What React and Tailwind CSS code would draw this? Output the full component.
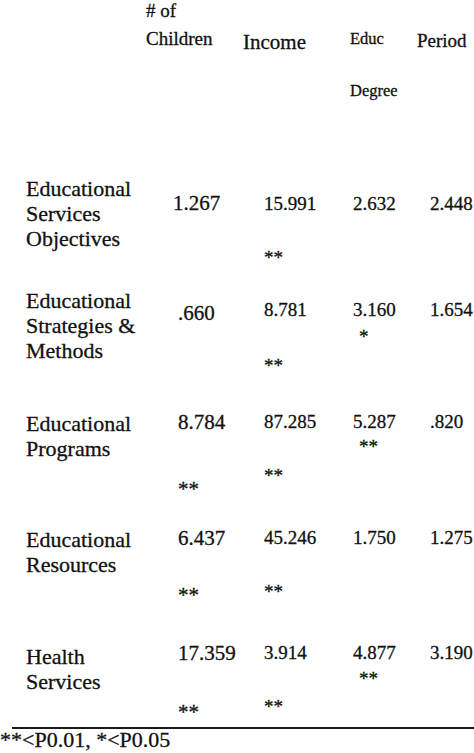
import React from "react";

// same column grid for header and every row
const cols = "grid grid-cols-[146px_97px_107px_67px_57px]";

const Label = ({ lines }) => (
  <div className="pl-[26px] text-[22px] leading-[25px]">
    {lines.map((l) => (
      <div key={l}>{l}</div>
    ))}
  </div>
);

export default function App() {
  return (
    <div className="w-[474px] h-[753px] overflow-hidden bg-white text-[#111111] [-webkit-text-stroke:0.3px_#111111] [font-family:Liberation_Serif,Times_New_Roman,serif]">
      {/* Header */}
      <div className={`${cols} h-[176px]`}>
        <div />
        <div className="pt-[1.4px] text-[19px] leading-none">
          <div># of</div>
          <div className="mt-[8.7px]">Children</div>
        </div>
        <div className="pt-[31.7px] text-[21px] leading-none">Income</div>
        <div className="pt-[31.2px] text-[16.5px] leading-none">
          <div>Educ</div>
          <div className="mt-[35.2px]">Degree</div>
        </div>
        <div className="pt-[30.8px] text-[19px] leading-none">Period</div>
      </div>

      {/* Row 1 */}
      <div className={`${cols} h-[112px]`}>
        <Label lines={["Educational", "Services", "Objectives"]} />
        <div className="pl-[27px] pt-[17px] text-[21px] leading-none">1.267</div>
        <div className="pl-[21px] pt-[18px] text-[19px] leading-none">
          <div>15.991</div>
          <div className="mt-[34.5px]">**</div>
        </div>
        <div className="pl-[3px] pt-[18px] text-[19px] leading-none">2.632</div>
        <div className="pl-[13px] pt-[18px] text-[19px] leading-none">2.448</div>
      </div>

      {/* Row 2 */}
      <div className={`${cols} h-[123px]`}>
        <Label lines={["Educational", "Strategies &", "Methods"]} />
        <div className="pl-[32px] pt-[15.3px] text-[21px] leading-none">.660</div>
        <div className="pl-[21px] pt-[11.6px] text-[19px] leading-none">
          <div>8.781</div>
          <div className="mt-[37.6px]">**</div>
        </div>
        <div className="pl-[3px] pt-[11.6px] text-[19px] leading-none">
          <div>3.160</div>
          <div className="pl-[6px] mt-[8.3px]">*</div>
        </div>
        <div className="pl-[13px] pt-[11.6px] text-[19px] leading-none">1.654</div>
      </div>

      {/* Row 3 */}
      <div className={`${cols} h-[116px]`}>
        <Label lines={["Educational", "Programs"]} />
        <div className="pl-[32px] pt-[1px] text-[21px] leading-none">
          <div>8.784</div>
          <div className="mt-[45.7px]">**</div>
        </div>
        <div className="pl-[21px] pt-[1.3px] text-[19px] leading-none">
          <div>87.285</div>
          <div className="mt-[34.3px]">**</div>
        </div>
        <div className="pl-[3px] pt-[1.3px] text-[19px] leading-none">
          <div>5.287</div>
          <div className="pl-[6px] mt-[6px]">**</div>
        </div>
        <div className="pl-[13px] pt-[1.3px] text-[19px] leading-none">.820</div>
      </div>

      {/* Row 4 */}
      <div className={`${cols} h-[117px]`}>
        <Label lines={["Educational", "Resources"]} />
        <div className="pl-[32px] pt-[1px] text-[21px] leading-none">
          <div>6.437</div>
          <div className="mt-[35.6px]">**</div>
        </div>
        <div className="pl-[21px] pt-[1.3px] text-[19px] leading-none">
          <div>45.246</div>
          <div className="mt-[34.3px]">**</div>
        </div>
        <div className="pl-[3px] pt-[1.3px] text-[19px] leading-none">1.750</div>
        <div className="pl-[13px] pt-[1.3px] text-[19px] leading-none">1.275</div>
      </div>

      {/* Row 5 */}
      <div className={`${cols} h-[83px]`}>
        <Label lines={["Health", "Services"]} />
        <div className="pl-[32px] -mt-[1.4px] text-[21px] leading-none">
          <div>17.359</div>
          <div className="mt-[38px]">**</div>
        </div>
        <div className="pl-[21px] -mt-[1.1px] text-[19px] leading-none">
          <div>3.914</div>
          <div className="mt-[35px]">**</div>
        </div>
        <div className="pl-[3px] -mt-[1.1px] text-[19px] leading-none">
          <div>4.877</div>
          <div className="pl-[6px] mt-[6.7px]">**</div>
        </div>
        <div className="pl-[13px] -mt-[1.1px] text-[19px] leading-none">3.190</div>
      </div>

      {/* Rule + footnote */}
      <div className="ml-[12px] h-[2px] bg-[#1a1a1a]" />
      <div className="text-[22px] leading-none whitespace-nowrap">
        {"**<P0.01, *<P0.05"}
      </div>
    </div>
  );
}
